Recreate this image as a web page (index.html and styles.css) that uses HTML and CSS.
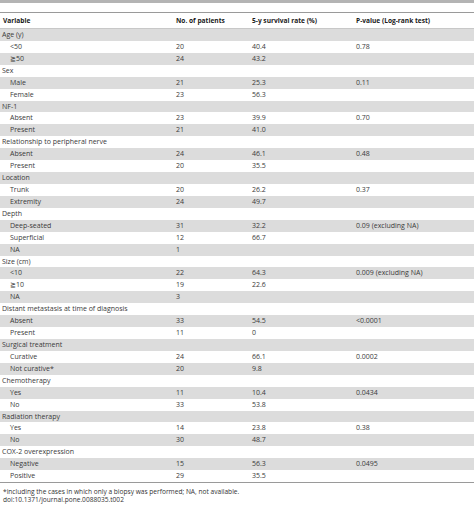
FILE: index.html
```html
<!DOCTYPE html>
<html>
<head>
<meta charset="utf-8">
<link rel="stylesheet" href="styles.css">
</head>
<body>
<div class="page">
  <div class="topband"></div>
  <table class="tbl">
    <colgroup>
      <col class="c1"><col class="c2"><col class="c3"><col class="c4">
    </colgroup>
    <thead>
      <tr><th>Variable</th><th>No. of patients</th><th>5-y survival rate (%)</th><th>P-value (Log-rank test)</th></tr>
    </thead>
    <tbody>
      <tr><td>Age (y)</td><td></td><td></td><td></td></tr>
      <tr><td class="sub">&lt;50</td><td>20</td><td>40.4</td><td>0.78</td></tr>
      <tr><td class="sub">≧50</td><td>24</td><td>43.2</td><td></td></tr>
      <tr><td>Sex</td><td></td><td></td><td></td></tr>
      <tr><td class="sub">Male</td><td>21</td><td>25.3</td><td>0.11</td></tr>
      <tr><td class="sub">Female</td><td>23</td><td>56.3</td><td></td></tr>
      <tr><td>NF-1</td><td></td><td></td><td></td></tr>
      <tr><td class="sub">Absent</td><td>23</td><td>39.9</td><td>0.70</td></tr>
      <tr><td class="sub">Present</td><td>21</td><td>41.0</td><td></td></tr>
      <tr><td>Relationship to peripheral nerve</td><td></td><td></td><td></td></tr>
      <tr><td class="sub">Absent</td><td>24</td><td>46.1</td><td>0.48</td></tr>
      <tr><td class="sub">Present</td><td>20</td><td>35.5</td><td></td></tr>
      <tr><td>Location</td><td></td><td></td><td></td></tr>
      <tr><td class="sub">Trunk</td><td>20</td><td>26.2</td><td>0.37</td></tr>
      <tr><td class="sub">Extremity</td><td>24</td><td>49.7</td><td></td></tr>
      <tr><td>Depth</td><td></td><td></td><td></td></tr>
      <tr><td class="sub">Deep-seated</td><td>31</td><td>32.2</td><td>0.09 (excluding NA)</td></tr>
      <tr><td class="sub">Superficial</td><td>12</td><td>66.7</td><td></td></tr>
      <tr><td class="sub">NA</td><td>1</td><td></td><td></td></tr>
      <tr><td>Size (cm)</td><td></td><td></td><td></td></tr>
      <tr><td class="sub">&lt;10</td><td>22</td><td>64.3</td><td>0.009 (excluding NA)</td></tr>
      <tr><td class="sub">≧10</td><td>19</td><td>22.6</td><td></td></tr>
      <tr><td class="sub">NA</td><td>3</td><td></td><td></td></tr>
      <tr><td>Distant metastasis at time of diagnosis</td><td></td><td></td><td></td></tr>
      <tr><td class="sub">Absent</td><td>33</td><td>54.5</td><td>&lt;0.0001</td></tr>
      <tr><td class="sub">Present</td><td>11</td><td>0</td><td></td></tr>
      <tr><td>Surgical treatment</td><td></td><td></td><td></td></tr>
      <tr><td class="sub">Curative</td><td>24</td><td>66.1</td><td>0.0002</td></tr>
      <tr><td class="sub">Not curative*</td><td>20</td><td>9.8</td><td></td></tr>
      <tr><td>Chemotherapy</td><td></td><td></td><td></td></tr>
      <tr><td class="sub">Yes</td><td>11</td><td>10.4</td><td>0.0434</td></tr>
      <tr><td class="sub">No</td><td>33</td><td>53.8</td><td></td></tr>
      <tr><td>Radiation therapy</td><td></td><td></td><td></td></tr>
      <tr><td class="sub">Yes</td><td>14</td><td>23.8</td><td>0.38</td></tr>
      <tr><td class="sub">No</td><td>30</td><td>48.7</td><td></td></tr>
      <tr><td>COX-2 overexpression</td><td></td><td></td><td></td></tr>
      <tr><td class="sub">Negative</td><td>15</td><td>56.3</td><td>0.0495</td></tr>
      <tr><td class="sub">Positive</td><td>29</td><td>35.5</td><td></td></tr>
    </tbody>
  </table>
  <div class="foot">
    <p class="note">*including the cases in which only a biopsy was performed; NA, not available.</p>
    <p class="doi">doi:10.1371/journal.pone.0088035.t002</p>
  </div>
</div>
</body>
</html>
```
FILE: styles.css
```css
html, body {
  margin: 0;
  padding: 0;
  background: #ffffff;
}
.page {
  width: 474px;
  font-family: "Open Sans", "Liberation Sans", sans-serif;
  color: #3a3a3a;
}
.topband {
  height: 3px;
  background: #b4b4b4;
  margin-bottom: 9px;
}
.tbl {
  width: 474px;
  border-collapse: collapse;
  table-layout: fixed;
  font-size: 7px;
  border-top: 1px solid #9a9a9a;
  border-bottom: 1.5px solid #9a9a9a;
}
.c1 { width: 174px; }
.c2 { width: 76px; }
.c3 { width: 104px; }
.c4 { width: 120px; }
.tbl th {
  height: 15px;
  padding: 0 0 0 2px;
  text-align: left;
  font-weight: 700;
  font-size: 6.6px;
  color: #1a1a1a;
  border-bottom: 1px solid #c8c8c8;
  line-height: 15px;
}
.tbl th:first-child { padding-left: 3px; }
.tbl td {
  height: 11.92px;
  padding: 0 0 0 2px;
  line-height: 11.92px;
  white-space: nowrap;
}
.tbl td:first-child { padding-left: 2px; }
.tbl td.sub { padding-left: 10px; }
.tbl tbody tr:nth-child(odd) { background: #dcdcdc; }
.foot {
  padding: 5px 0 0 3px;
  font-size: 6.6px;
  line-height: 8px;
  color: #333;
}
.foot p { margin: 0; }
```
